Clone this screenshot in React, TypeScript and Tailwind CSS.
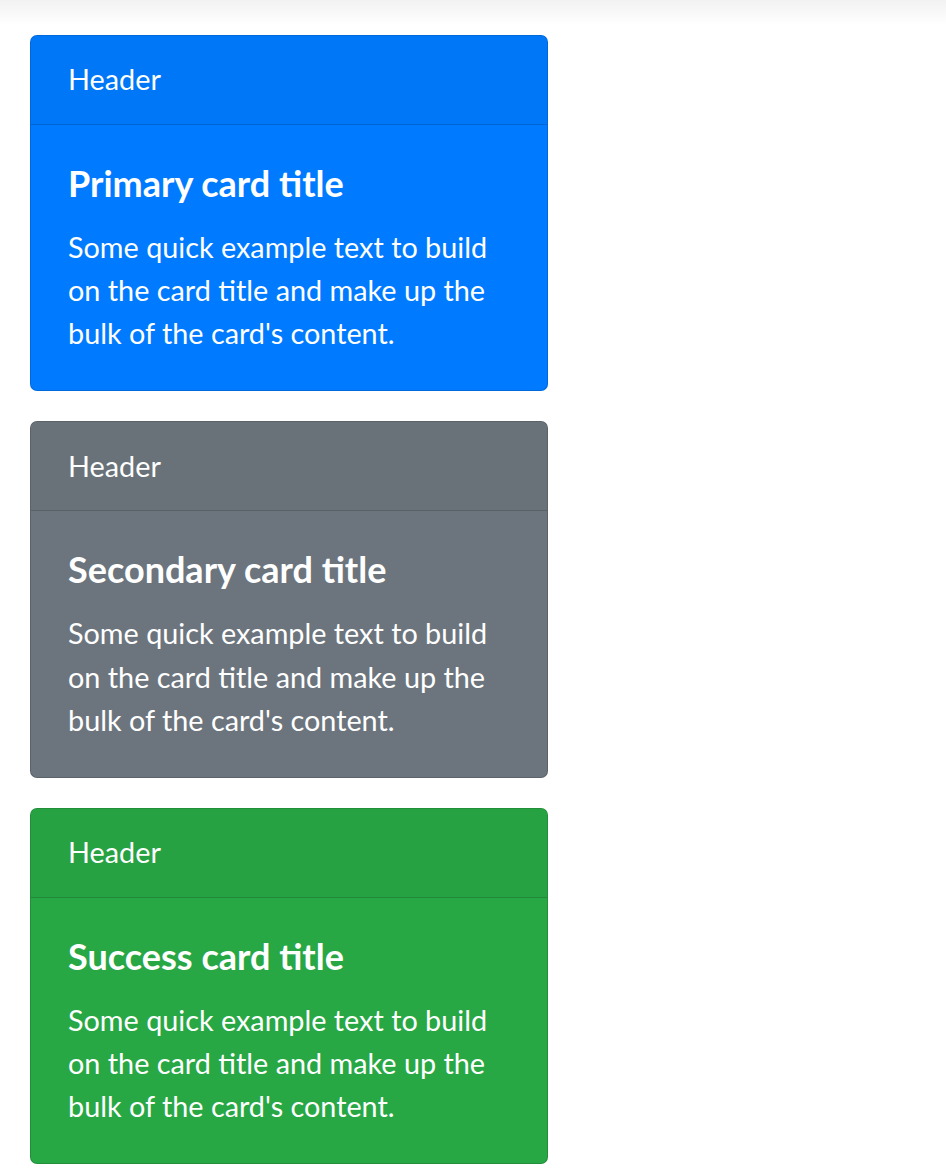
import React from "react";

type CardProps = {
  title: string;
  bg: string;
  headerBg: string;
};

const text = "Some quick example text to build on the card title and make up the bulk of the card's content.";

function Card({ title, bg, headerBg }: CardProps) {
  return (
    <div className={`w-[518px] rounded-[7px] border border-black/15 text-white overflow-hidden ${bg}`}>
      <div className={`px-[37px] py-[22.4px] border-b border-black/15 text-[28.8px] leading-[43.2px] ${headerBg}`}>
        Header
      </div>
      <div className="px-[37px] pt-[37px] pb-[34.8px]">
        <h5 className="text-[36px] leading-[43.2px] font-bold mb-[20.8px]">{title}</h5>
        <p className="text-[28.8px] leading-[43.2px]">{text}</p>
      </div>
    </div>
  );
}

export default function App() {
  return (
    <div className="relative min-h-screen bg-white font-['Lato',sans-serif]">
      {/* faint shade under the browser chrome */}
      <div className="absolute inset-x-0 top-0 h-[26px] bg-gradient-to-b from-[#f2f2f2] to-white" />
      <div className="relative flex flex-col gap-[30px] pl-[30px] pt-[35px] pb-[10px]">
        <Card title="Primary card title" bg="bg-[#007bff]" headerBg="bg-[#0077f7]" />
        <Card title="Secondary card title" bg="bg-[#6c757d]" headerBg="bg-[#697279]" />
        <Card title="Success card title" bg="bg-[#28a745]" headerBg="bg-[#27a243]" />
      </div>
    </div>
  );
}
